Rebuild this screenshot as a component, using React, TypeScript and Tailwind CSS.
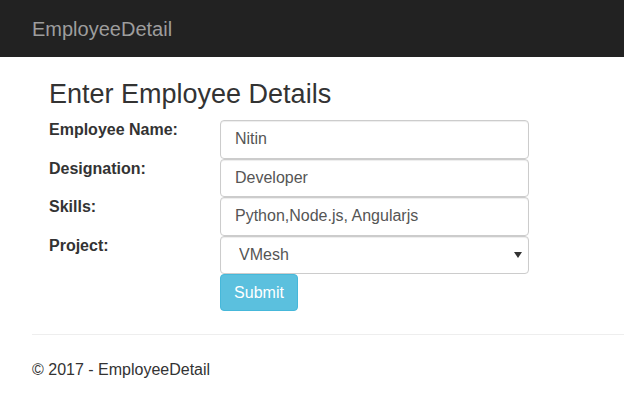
import { useState } from 'react'

const font = { fontFamily: '"Liberation Sans", Arial, sans-serif' }

const inputCls =
    'w-[309px] h-[38.5px] border border-[#ccc] rounded-[4px] px-[14px] text-[16px] text-[#555] bg-white shadow-[inset_0_1px_1px_rgba(0,0,0,0.075)] outline-none'

export default function App() {
    const [name, setName] = useState('Nitin')
    const [designation, setDesignation] = useState('Developer')
    const [skills, setSkills] = useState('Python,Node.js, Angularjs')
    const [project, setProject] = useState('VMesh')

    const rows = [
        { label: 'Employee Name:', value: name, set: setName },
        { label: 'Designation:', value: designation, set: setDesignation },
        { label: 'Skills:', value: skills, set: setSkills },
    ]

    return (
        <div className="min-h-screen bg-white text-[#333]" style={font}>
            {/* Navbar */}
            <nav className="h-[57px] bg-[#222] flex items-center px-[32px]">
                <span className="text-[20px] text-[#9d9d9d]">EmployeeDetail</span>
            </nav>

            <div className="pl-[32px]">
                <form className="pl-[17px]" onSubmit={e => e.preventDefault()}>
                    <h3 className="text-[27px] leading-[30px] mt-[22px] mb-[11px]">Enter Employee Details</h3>

                    {rows.map(r => (
                        <div key={r.label} className="flex">
                            <label className="w-[171px] font-bold text-[16px] leading-[20px]">{r.label}</label>
                            <input
                                className={inputCls}
                                value={r.value}
                                onChange={e => r.set(e.target.value)}
                            />
                        </div>
                    ))}

                    <div className="flex">
                        <label className="w-[171px] font-bold text-[16px] leading-[20px]">Project:</label>
                        <div className="relative">
                            <select
                                className={`${inputCls} appearance-none pl-[18px]`}
                                value={project}
                                onChange={e => setProject(e.target.value)}
                            >
                                <option>VMesh</option>
                                <option>Other</option>
                            </select>
                            <svg
                                className="absolute right-[7px] top-[16px] pointer-events-none"
                                width="8"
                                height="6"
                                viewBox="0 0 8 6"
                            >
                                <path d="M0 0h8L4 6z" fill="#333" />
                            </svg>
                        </div>
                    </div>

                    <div className="pl-[171px]">
                        <button
                            type="submit"
                            className="w-[78px] h-[37px] bg-[#5bc0de] border border-[#46b8da] rounded-[4px] text-white text-[16px]"
                        >
                            Submit
                        </button>
                    </div>
                </form>

                <hr className="mt-[23px] border-0 border-t border-[#eee]" />

                <footer className="pt-[25px]">
                    <p className="text-[16px] leading-[20px]">© 2017 - EmployeeDetail</p>
                </footer>
            </div>
        </div>
    )
}
